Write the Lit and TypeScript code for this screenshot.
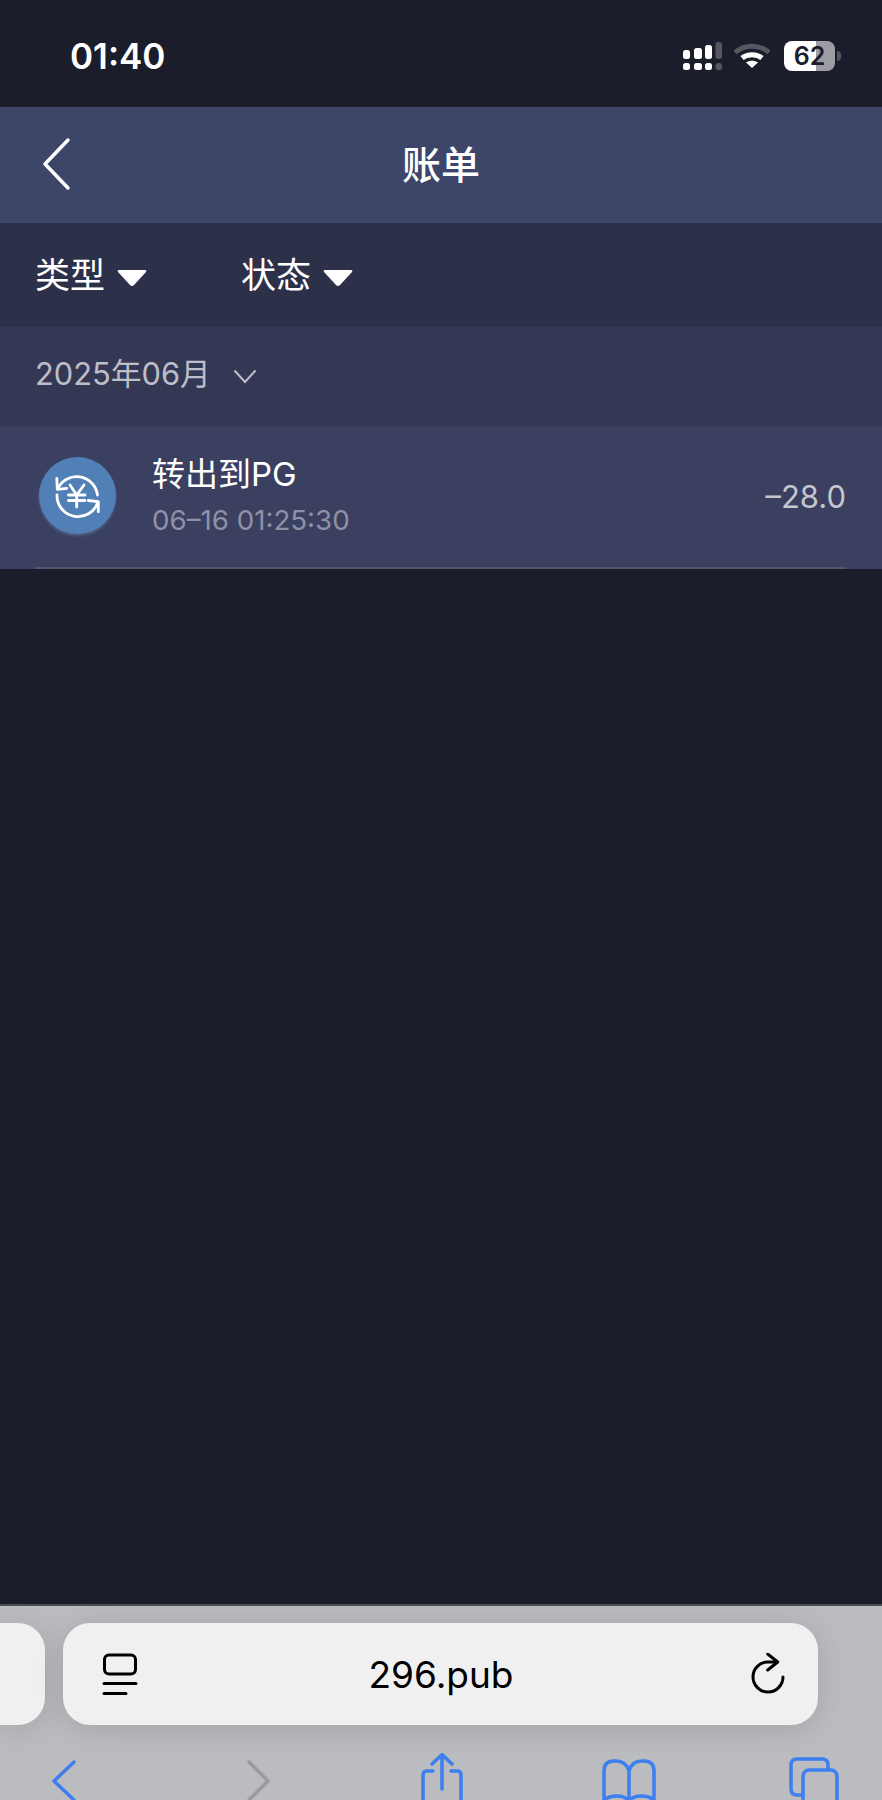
import { LitElement, html, css } from "lit";
import { customElement } from "lit/decorators.js";

@customElement("app-root")
export class AppRoot extends LitElement {
  static styles = css`
    :host { display: block; width: 882px; height: 1800px; background: #1b1d2a; font-family: "Inter", "Noto Sans CJK SC", sans-serif; overflow: hidden; }
    .page { height: 1800px; display: flex; flex-direction: column; overflow: hidden; }
    .status { height: 107px; flex: none; display: flex; align-items: center; padding: 5px 41px 0 70px; box-sizing: border-box; }
    .time { color: #fff; font-size: 35px; font-weight: 600; flex: 1; line-height: 1; }
    .sig { display: block; margin-right: 12px; }
    .wifi { display: block; margin-right: 14px; margin-bottom: 2px; }
    .battery { width: 51px; height: 30px; border-radius: 8px; background: linear-gradient(90deg, #fff 0 32px, #9c9ca2 32px); color: #1b1d2a; font-size: 25px; font-weight: 600; display: flex; align-items: center; justify-content: center; line-height: 1; }
    .nub { width: 4px; height: 10px; margin-left: 2px; background: #55565f; border-radius: 0 4px 4px 0; }
    .header { height: 116px; flex: none; background: #3d4668; display: flex; align-items: center; justify-content: center; position: relative; padding-bottom: 2px; box-sizing: border-box; }
    .title { color: #fff; font-size: 39px; line-height: 1; font-weight: 500; }
    .back { position: absolute; left: 42px; top: 30px; }
    .filters { height: 104px; flex: none; background: #2d3049; display: flex; align-items: center; padding: 0 0 0 35px; box-sizing: border-box; }
    .filter { display: flex; align-items: center; width: 206px; color: #fff; font-size: 35px; line-height: 1; gap: 12px; }
    .filter svg { margin-top: 5px; }
    .date { height: 99px; flex: none; background: #353855; display: flex; align-items: center; padding: 0 0 4px 35px; box-sizing: border-box; color: #bdbec8; font-size: 30.8px; gap: 22px; line-height: 1; }
    .date svg { margin-top: 3px; }
    .row { height: 143px; flex: none; background: #3b3f60; display: flex; align-items: center; padding: 0 36px 4px 39px; box-sizing: border-box; position: relative; }
    .row::after { content: ""; position: absolute; left: 35px; right: 36px; bottom: 0; height: 2px; background: #53556f; }
    .coin { width: 77px; height: 77px; border-radius: 50%; background: #5080b5; flex: none; display: flex; align-items: center; justify-content: center; box-shadow: 0 2px 3px rgba(120,170,220,.35); }
    .info { flex: 1; margin-left: 36px; display: flex; flex-direction: column; gap: 10px; }
    .name { color: #fff; font-size: 33px; line-height: 38px; }
    .when { color: #8f91a6; font-size: 27.7px; line-height: 34px; }
    .amount { color: #c5c6cf; font-size: 31px; line-height: 1; margin-top: 2px; }
    .spacer { flex: 1; }
    .bar { height: 196px; flex: none; background: #bbbcbf; border-top: 2px solid #4b4c57; box-sizing: border-box; overflow: hidden; padding-top: 17px; }
    .pills { display: flex; gap: 18px; height: 102px; }
    .pill { background: #f0f0f1; border-radius: 27px; box-shadow: 0 4px 30px rgba(0,0,0,.13); }
    .pill.side { width: 45px; border-radius: 0 27px 27px 0; flex: none; }
    .pill.main { width: 755px; flex: none; display: flex; align-items: center; padding: 0 31px 0 39px; box-sizing: border-box; }
    .url { flex: 1; text-align: center; color: #000; font-size: 37px; line-height: 1; margin-right: 7px; }
    .tools { display: flex; align-items: flex-start; padding: 35px 0 0 52px; }
    .tools svg { display: block; flex: none; }
    .t2 { margin-left: 171px; }
    .t3 { margin-left: 151px; margin-top: -7px; }
    .t4 { margin-left: 139px; margin-top: -1px; }
    .t5 { margin-left: 133px; margin-top: -3px; }
  `;

  render() {
    const tri = html`<svg width="30" height="19" viewBox="0 0 30 19"><path d="M2 2 H28 Q30 2 29 4 L17 17 Q15 19 13 17 L1 4 Q0 2 2 2 Z" fill="#fff"/></svg>`;
    return html`
      <div class="page">
        <div class="status">
          <div class="time">01:40</div>
          <svg class="sig" width="39" height="28" viewBox="0 0 39 28">
            <g fill="#fff">
              <rect x="0" y="8" width="7" height="9" rx="2.500"/><rect x="11" y="6" width="8" height="11" rx="2.500"/><rect x="22" y="3" width="7" height="14" rx="2.500"/>
              <rect x="0" y="21" width="7" height="7" rx="2.500"/><rect x="11" y="21" width="8" height="7" rx="2.500"/><rect x="22" y="21" width="7" height="7" rx="2.500"/>
            </g>
            <g fill="#55565f"><rect x="32.500" y="0" width="6.500" height="17" rx="2.500"/><rect x="32.500" y="21" width="6.500" height="7" rx="2.500"/></g>
          </svg>
          <svg class="wifi" width="36" height="27" viewBox="0 0 36 27" fill="none" stroke-width="5">
            <path d="M1 10.500 C10.500 2 25.500 2 35 10.500" stroke="#55565f"/>
            <path d="M8 16 C13.500 11.500 22.500 11.500 28 16" stroke="#fff"/>
            <path d="M18 26 L12 20.500 C15.500 18 20.500 18 24 20.500 Z" fill="#fff" stroke="none"/>
          </svg>
          <div class="battery">62</div>
          <div class="nub"></div>
        </div>
        <div class="header">
          <svg class="back" width="30" height="56" viewBox="0 0 30 56" fill="none"><path d="M26 3 L3 27 L26 51" stroke="#fff" stroke-width="3.500" stroke-linecap="round" stroke-linejoin="round"/></svg>
          <div class="title">账单</div>
        </div>
        <div class="filters">
          <div class="filter"><span>类型</span>${tri}</div>
          <div class="filter"><span>状态</span>${tri}</div>
        </div>
        <div class="date">
          <span>2025年06月</span>
          <svg width="24" height="15" viewBox="0 0 24 15" fill="none"><path d="M1.500 1.500 L12 13 L22.500 1.500" stroke="#bdbec8" stroke-width="2"/></svg>
        </div>
        <div class="row">
          <div class="coin">
            <svg width="48" height="48" viewBox="0 0 48 48" fill="none" stroke="#fff" stroke-width="2.800" stroke-linecap="round" stroke-linejoin="round">
              <path d="M3.500 17 A21 21 0 0 1 43.500 23"/>
              <path d="M44 30 A21 21 0 0 1 3 23"/>
              <path d="M2.800 6.500 L3.300 17.300 L12.700 16.300"/>
              <path d="M44.300 39.700 L44.300 29.700 L34.300 28.500"/>
              <path d="M16 13 L22.700 23 L30 13 M22.700 23 V35 M14.500 23 H31 M14.500 28.500 H31"/>
            </svg>
          </div>
          <div class="info">
            <div class="name">转出到PG</div>
            <div class="when">06–16 01:25:30</div>
          </div>
          <div class="amount">–28.0</div>
        </div>
        <div class="spacer"></div>
        <div class="bar">
          <div class="pills">
            <div class="pill side"></div>
            <div class="pill main">
              <svg width="36" height="42" viewBox="0 0 36 42" fill="none" stroke="#000" stroke-width="3" stroke-linecap="round"><rect x="2.500" y="2" width="31" height="19" rx="4.500"/><path d="M2 30.500 H34 M2 40.500 H24"/></svg>
              <div class="url">296.pub</div>
              <svg width="36" height="42" viewBox="0 0 36 42" fill="none" stroke="#000" stroke-width="3" stroke-linecap="round" stroke-linejoin="round"><path d="M26 9 H17 A15 15 0 1 0 32 24"/><path d="M16.700 1 L26.700 9 L16.700 17"/></svg>
            </div>
          </div>
          <div class="tools">
            <svg width="24" height="76" viewBox="0 0 24 76" fill="none"><path d="M22 2 L2 21 L22 40" stroke="#3d7ff0" stroke-width="3.500" stroke-linecap="round" stroke-linejoin="round"/></svg>
            <svg class="t2" width="23" height="76" viewBox="0 0 23 76" fill="none"><path d="M2 2 L21 21 L2 40" stroke="#9a9b9e" stroke-width="3.500" stroke-linecap="round" stroke-linejoin="round"/></svg>
            <svg class="t3" width="42" height="60" viewBox="0 0 42 60" fill="none" stroke="#3d7ff0" stroke-width="3.500" stroke-linecap="round" stroke-linejoin="round"><path d="M21 36 V2 M11 11 L21 1.500 L31 11"/><path d="M12 18 H6 Q2 18 2 22 V56 Q2 60 6 60 H36 Q40 60 40 56 V22 Q40 18 36 18 H30"/></svg>
            <svg class="t4" width="54" height="60" viewBox="0 0 54 60" fill="none" stroke="#3d7ff0" stroke-width="3.500" stroke-linejoin="round"><path d="M27 12 C25 5 20 2 14 2 H12 Q2 2 2 12 V41 C8 36 22 35 27 42 C32 35 46 36 52 41 V12 Q52 2 42 2 H40 C34 2 29 5 27 12 Z M27 12 V42"/></svg>
            <svg class="t5" width="50" height="60" viewBox="0 0 50 60" fill="none" stroke="#3d7ff0" stroke-width="3.500" stroke-linejoin="round"><path d="M39 12 V8 Q39 2 33 2 H8 Q2 2 2 8 V32 Q2 38 8 38 H14"/><rect x="14" y="13" width="34" height="44" rx="6"/></svg>
          </div>
        </div>
      </div>
    `;
  }
}
